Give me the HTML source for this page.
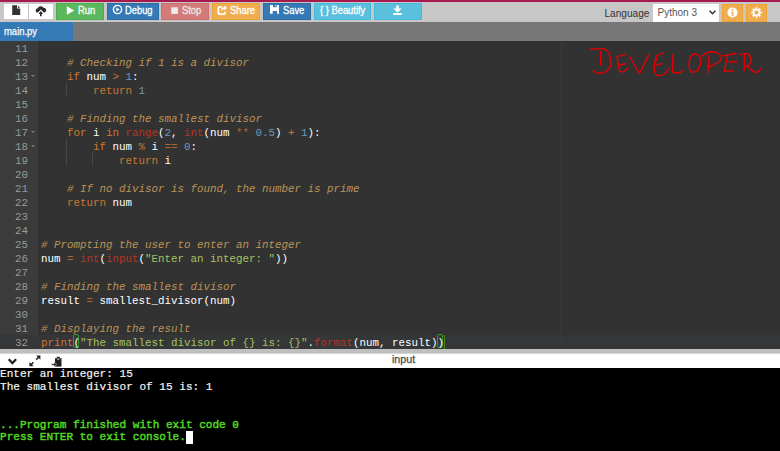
<!DOCTYPE html>
<html>
<head>
<meta charset="utf-8">
<style>
html,body{margin:0;padding:0;}
body{width:780px;height:451px;overflow:hidden;position:relative;background:#323232;font-family:"Liberation Sans",sans-serif;}
#stripe{position:absolute;left:0;top:0;width:780px;height:2px;background:#a6194f;}
#toolbar{position:absolute;left:0;top:2px;width:780px;height:20px;background:#c7c7c7;}
.btn{position:absolute;top:1px;height:17px;box-sizing:border-box;color:#fff;font-size:10.4px;line-height:14px;white-space:nowrap;border-radius:0;}
.t{position:absolute;top:0;display:inline-block;transform:scaleX(.9);transform-origin:0 0;-webkit-text-stroke:0.3px currentColor;}
#tabbar{position:absolute;left:0;top:22px;width:780px;height:19px;background:#777;}
#tab{position:absolute;left:0;top:0;width:73px;height:19px;background:#337ab7;color:#fff;font-size:10.5px;line-height:18px;box-sizing:border-box;}
#editor{position:absolute;left:0;top:41px;width:780px;height:308px;background:#323232;overflow:hidden;}
#gutter{position:absolute;left:0;top:0;width:38px;height:308px;background:#3b3b3b;}
.ln{position:absolute;left:0;width:28px;text-align:right;color:#999;height:14px;line-height:14px;font-family:"Liberation Mono",monospace;font-size:10.83px;}
.fold{position:absolute;left:31px;width:5px;height:14px;}
#code{position:absolute;left:41px;top:1px;}
.cl{position:absolute;left:0;height:14px;line-height:14px;white-space:pre;color:#fff;font-family:"Liberation Mono",monospace;font-size:10.83px;}
.k{color:#cc7833}.e{opacity:.78}.c{color:#bc9458;font-style:italic}.n{color:#6c99bb}.s{color:#a5c261}.f{color:#b83426}
#pm{position:absolute;left:561px;top:0;width:1px;height:308px;background:#3b3b3b;}
#active{position:absolute;left:0;top:294px;width:780px;height:14px;background:#353637;}
#gactive{position:absolute;left:0;top:294px;width:38px;height:14px;background:#353637;}
.br{position:absolute;height:14px;box-sizing:border-box;border:1px solid #2f9a2f;border-radius:2px;}
.guide{position:absolute;width:1px;background:#474747;}
#split{position:absolute;left:0;top:349px;width:780px;height:5px;background:#bfbfbf;border-bottom:1px solid #d6d6d6;box-sizing:border-box;}
#ctool{position:absolute;left:0;top:354px;width:780px;height:14px;background:#fff;}
#console{position:absolute;left:0;top:368px;width:780px;height:83px;background:#000;}
.co{position:absolute;left:0;height:13px;line-height:13px;white-space:pre;font-family:"Liberation Mono",monospace;font-weight:normal;font-size:11.07px;color:#f4f4f4;-webkit-text-stroke:0.2px #f4f4f4;}
.g{color:#50d820;-webkit-text-stroke:0.45px #50d820;}
</style>
</head>
<body>
<div id="stripe"></div>
<div id="toolbar">
  <div class="btn" style="left:4px;width:24px;background:#fff;top:1.5px;height:15.5px;"><svg style="position:absolute;left:8px;top:1.2px" width="9" height="11" viewBox="0 0 9 11"><path d="M0.2 0.3 H5 V3.6 H8.2 V10 H0.2 Z" fill="#333"/><path d="M5.8 0.5 L8.1 2.8 H5.8 Z" fill="#333"/></svg></div>
  <div class="btn" style="left:29px;width:24px;background:#fff;top:1.5px;height:15.5px;"><svg style="position:absolute;left:0;top:0" width="24" height="15.5" viewBox="29 3.5 24 15.5"><g fill="#2b2b2b"><circle cx="38" cy="10" r="2.35"/><circle cx="40.7" cy="8.6" r="2.9"/><circle cx="43.7" cy="9.8" r="2.45"/><rect x="38" y="9" width="5.8" height="3.2"/></g><path d="M37 13.6 L40.8 9.9 L44.6 13.6" fill="none" stroke="#fff" stroke-width="1.3"/><path d="M40.8 10.9 L43.1 13.4 H41.6 V15.8 H40 V13.4 H38.5 Z" fill="#2b2b2b"/></svg></div>
  <div class="btn" style="left:56px;width:48px;background:#5cb85c;border:1px solid #4cae4c;"><svg style="position:absolute;left:9.3px;top:1.7px" width="9" height="9" viewBox="0 0 9 9"><path d="M0.8 0.3 L8.2 4.5 L0.8 8.7 Z" fill="#fff"/></svg><span class="t" style="left:21px;top:0">Run</span></div>
  <div class="btn" style="left:107px;width:51.5px;background:#337ab7;border:1px solid #2e6da4;"><svg style="position:absolute;left:3.8px;top:0.1px" width="11" height="11" viewBox="0 0 11 11"><circle cx="5.5" cy="5.5" r="4.1" fill="none" stroke="#fff" stroke-width="1.4"/><path d="M4.3 3.5 L7.6 5.5 L4.3 7.5 Z" fill="#fff"/></svg><span class="t" style="left:17px;top:0">Debug</span></div>
  <div class="btn" style="left:161px;width:48px;background:#d37b78;border:1px solid #cf6f6b;color:#ebebeb;"><svg style="position:absolute;left:8.6px;top:2.6px" width="7.4" height="7.4" viewBox="0 0 8 8"><rect x="0.3" y="0.3" width="7.2" height="7.2" fill="#ebebeb"/></svg><span class="t" style="left:20px;top:0">Stop</span></div>
  <div class="btn" style="left:212px;width:48px;background:#f0ad4e;border:1px solid #eea236;"><svg style="position:absolute;left:3.6px;top:1px" width="11" height="11" viewBox="0 0 11 11"><path d="M5 1.9 H2.6 Q1.4 1.9 1.4 3.1 V7.9 Q1.4 9.1 2.6 9.1 H6.9 Q8.1 9.1 8.1 7.9 V6.8" fill="none" stroke="#fff" stroke-width="1.8"/><path d="M7.2 0.5 L10.3 3 L7.2 5.5 V3.9 Q5.2 4 4.4 6.4 Q3.8 2.6 7.2 2.1 Z" fill="#fff"/></svg><span class="t" style="left:17px;top:0">Share</span></div>
  <div class="btn" style="left:263px;width:48px;background:#337ab7;border:1px solid #2e6da4;"><svg style="position:absolute;left:5.8px;top:1.3px" width="9.6" height="8.8" viewBox="0 0 9.6 8.8"><path d="M0 0 H3 V2.3 H6.8 V0 H8.6 L9.6 1 V8.8 H7.1 V6 H2.7 V8.8 H0 Z" fill="#fff"/><rect x="5.3" y="0" width="0.9" height="1.5" fill="#fff" opacity=".8"/></svg><span class="t" style="left:19px;top:0">Save</span></div>
  <div class="btn" style="left:314px;width:57px;background:#5bc0de;border:1px solid #46b8da;"><span class="t" style="left:4.5px;top:0">{ } Beautify</span></div>
  <div class="btn" style="left:374px;width:48px;background:#5bc0de;border:1px solid #46b8da;"><svg style="position:absolute;left:17.2px;top:0.7px" width="11" height="10.6" viewBox="0 0 11 11"><path d="M4.1 0.4 H6.9 V3.6 H9.9 L5.5 7.7 L1.1 3.6 H4.1 Z" fill="#fff"/><rect x="1" y="8.3" width="9" height="2.2" fill="#fff"/></svg></div>
  <div style="position:absolute;left:604.5px;top:4.5px;font-size:10.1px;line-height:14px;color:#333;">Language</div>
  <div style="position:absolute;left:653px;top:2px;width:66px;height:17.5px;background:#fff;font-size:10px;line-height:18.5px;color:#555;box-sizing:border-box;padding-left:4.5px;border-radius:1px;">Python 3<svg style="position:absolute;left:56px;top:5.6px" width="7" height="5" viewBox="0 0 7 5"><path d="M0.6 0.8 L3.5 3.7 L6.4 0.8" fill="none" stroke="#333" stroke-width="1.5"/></svg></div>
  <div class="btn" style="left:722px;top:2px;width:21px;height:18px;background:#f0ad4e;border:1px solid #eea236;"><svg style="position:absolute;left:3.9px;top:2px" width="11" height="11" viewBox="0 0 11 11"><circle cx="5.5" cy="5.5" r="5.1" fill="#fff"/><circle cx="5.5" cy="3" r="1" fill="#f0ad4e"/><path d="M4.2 4.7 H6.3 V7.7 H7 V8.6 H4.1 V7.7 H4.8 V5.6 H4.2 Z" fill="#f0ad4e"/></svg></div>
  <div class="btn" style="left:746px;top:2px;width:21px;height:18px;background:#f0ad4e;border:1px solid #eea236;"><svg style="position:absolute;left:4px;top:2px" width="11" height="11" viewBox="-5.5 -5.5 11 11"><g fill="#fff"><circle r="3.6"/><rect x="-1.1" y="-5.2" width="2.2" height="10.4"/><rect x="-1.1" y="-5.2" width="2.2" height="10.4" transform="rotate(45)"/><rect x="-1.1" y="-5.2" width="2.2" height="10.4" transform="rotate(90)"/><rect x="-1.1" y="-5.2" width="2.2" height="10.4" transform="rotate(135)"/></g><circle r="2.1" fill="#f0ad4e"/></svg></div>
</div>
<div id="tabbar"><div id="tab"><span class="t" style="left:4px;top:0;-webkit-text-stroke:0.25px #fff;">main.py</span></div></div>
<div id="editor">
  <div id="active"></div>
  <div id="pm"></div>
  <div class="br" style="left:72.5px;top:293px;width:6.5px;"></div>
<div class="br" style="left:437px;top:293px;width:6px;"></div>
<div style="position:absolute;left:444px;top:294px;width:1px;height:14px;background:#52801a;"></div>
<svg style="position:absolute;left:580px;top:0" width="200" height="50" viewBox="580 41 200 50" fill="none" stroke="#e40000" stroke-width="1.4" stroke-linecap="round" stroke-linejoin="round">
<path d="M590.8 49.3 Q598 48.3 604.2 48.7 Q608 50.5 609.8 56 Q611.8 62 610.5 66.5 Q608 71.5 603 72.7 Q598 73.6 596 72.8 Q594.2 71.6 593.3 70.1"/>
<path d="M600.6 51.3 L600.7 65"/>
<path d="M625.8 54.4 Q621 55.6 617 56.7 Q618.2 63 619.4 70.8 Q621 72.4 623.2 71.8 Q626 70 628 67.6"/>
<path d="M618.7 65.7 Q622 64.4 625.8 63.7"/>
<path d="M629.9 56.7 Q634.5 66 639.5 73.3 Q644.5 64 648.5 55.1"/>
<path d="M663.5 52.8 Q660 54 656.2 56 Q655.4 58 656.4 60.5 Q656.2 58.5 656.2 56.4 Q654.2 63 654.2 69.5 Q655 75.5 658.3 75.9 Q662 75.6 664.5 74 Q667.2 71.5 669 68.5"/>
<path d="M656.6 65.2 Q659 64 662 63.7"/>
<path d="M673 54.4 Q672.6 63 672.4 72 Q676 73.2 679.5 73 Q681.5 72.2 682.7 70.9"/>
<path d="M693.9 53.8 Q690 55.5 689.1 62 Q688.6 70 691.5 72 Q695 72.8 697.8 70 Q700.8 65.5 700.9 60.5 Q700.4 54.6 693.9 53.8 Z"/>
<path d="M702 56.1 Q705 53.3 709 52.3 Q713 51.6 716.5 52.6 Q720 53.8 721.3 56.5 Q721.9 59.5 719.5 61.5 Q715 64.4 709 67"/>
<path d="M709.1 55.4 Q708.6 64 707.8 73"/>
<path d="M724.5 55.7 Q730 54.4 736 53.5"/>
<path d="M727.7 55 Q726 63 724.5 71.4 Q728.5 71.3 732.8 70.8"/>
<path d="M729.6 62 L736.7 61.8"/>
<path d="M744.4 54.7 L744.1 70.8"/>
<path d="M740.5 54.8 Q743 53.6 746 53.5 Q749.4 54.2 750.6 57 Q751.8 60 750.8 62.5 Q749 65 747 65.8 Q745.5 66.3 744.4 66.3"/>
<path d="M747 66 Q750 69 753.3 71.4 Q755.5 72.6 757.8 72 Q759.8 70.5 760.8 68.5"/>
</svg>
<div id="gutter"><div id="gactive"></div></div>
  <div id="guides">
<div class="guide" style="left:66px;top:41px;height:14px"></div>
<div class="guide" style="left:66px;top:97px;height:28px"></div>
<div class="guide" style="left:92px;top:111px;height:14px"></div>
</div>
<div id="lines" style="position:absolute;left:0;top:1px;">
<div class="ln" style="top:0px">11</div>
<div class="ln" style="top:14px">12</div>
<div class="ln" style="top:28px">13</div>
<div class="fold" style="top:28px"><svg width="5" height="14" viewBox="0 0 5 14"><path d="M0 5 L4.2 5 L2.1 7.3 Z" fill="#777"/></svg></div>
<div class="ln" style="top:42px">14</div>
<div class="ln" style="top:56px">15</div>
<div class="ln" style="top:70px">16</div>
<div class="ln" style="top:84px">17</div>
<div class="fold" style="top:84px"><svg width="5" height="14" viewBox="0 0 5 14"><path d="M0 5 L4.2 5 L2.1 7.3 Z" fill="#777"/></svg></div>
<div class="ln" style="top:98px">18</div>
<div class="fold" style="top:98px"><svg width="5" height="14" viewBox="0 0 5 14"><path d="M0 5 L4.2 5 L2.1 7.3 Z" fill="#777"/></svg></div>
<div class="ln" style="top:112px">19</div>
<div class="ln" style="top:126px">20</div>
<div class="ln" style="top:140px">21</div>
<div class="ln" style="top:154px">22</div>
<div class="ln" style="top:168px">23</div>
<div class="ln" style="top:182px">24</div>
<div class="ln" style="top:196px">25</div>
<div class="ln" style="top:210px">26</div>
<div class="ln" style="top:224px">27</div>
<div class="ln" style="top:238px">28</div>
<div class="ln" style="top:252px">29</div>
<div class="ln" style="top:266px">30</div>
<div class="ln" style="top:280px">31</div>
<div class="ln" style="top:294px">32</div>
</div>
  <div id="code">
<div class="cl" style="top:14px">    <span class="c"># Checking if 1 is a divisor</span></div>
<div class="cl" style="top:28px">    <span class="k">if</span> num <span class="k">&gt;</span> <span class="n">1</span>:</div>
<div class="cl" style="top:42px">        <span class="k">return</span> <span class="n">1</span></div>
<div class="cl" style="top:70px">    <span class="c"># Finding the smallest divisor</span></div>
<div class="cl" style="top:84px">    <span class="k">for</span> i <span class="k">in</span> <span class="f">range</span>(<span class="n">2</span>, <span class="f">int</span>(num <span class="k e">**</span> <span class="n">0.5</span>) <span class="k">+</span> <span class="n">1</span>):</div>
<div class="cl" style="top:98px">        <span class="k">if</span> num <span class="k">%</span> i <span class="k e">==</span> <span class="n">0</span>:</div>
<div class="cl" style="top:112px">            <span class="k">return</span> i</div>
<div class="cl" style="top:140px">    <span class="c"># If no divisor is found, the number is prime</span></div>
<div class="cl" style="top:154px">    <span class="k">return</span> num</div>
<div class="cl" style="top:196px"><span class="c"># Prompting the user to enter an integer</span></div>
<div class="cl" style="top:210px">num <span class="k e">=</span> <span class="f">int</span>(<span class="f">input</span>(<span class="s">"Enter an integer: "</span>))</div>
<div class="cl" style="top:238px"><span class="c"># Finding the smallest divisor</span></div>
<div class="cl" style="top:252px">result <span class="k e">=</span> smallest_divisor(num)</div>
<div class="cl" style="top:280px"><span class="c"># Displaying the result</span></div>
<div class="cl" style="top:294px"><span class="k">print</span>(<span class="s">"The smallest divisor of {} is: {}"</span>.<span class="f">format</span>(num, result))</div>
</div>
</div>
<div id="split"></div>
<div id="ctool"><svg style="position:absolute;left:0;top:0" width="70" height="14" viewBox="0 354 70 14"><path d="M8.7 359.3 L12.4 363 L16.1 359.3" fill="none" stroke="#222" stroke-width="2.3"/><path d="M36.2 359.6 L39 356.8 M33.4 362.4 L30.8 365" stroke="#222" stroke-width="1.5" fill="none"/><path d="M36.2 355.5 H40.4 V359.7 Z M29.4 366.2 H33.6 L29.4 362 Z" fill="#222"/><path d="M55 358.2 H61.5 V366.6 H55 Z" fill="#222"/><rect x="56.8" y="356.8" width="3" height="2.2" fill="#222"/><rect x="57.3" y="358.6" width="2" height="1" fill="#fff"/><path d="M51.4 363.7 H54 V362.1 L56.7 364.5 L54 366.9 V365.3 H51.4 Z" fill="#222" stroke="#fff" stroke-width="0.5"/></svg><div style="position:absolute;left:392px;top:-1px;font-size:10.7px;line-height:13px;color:#4a4a4a;-webkit-text-stroke:0.25px #4a4a4a;">input</div></div>
<div id="console">
  <div class="co" style="top:0px">Enter an integer: 15</div>
  <div class="co" style="top:12.5px">The smallest divisor of 15 is: 1</div>
  <div class="co g" style="top:51px">...Program finished with exit code 0</div>
  <div class="co g" style="top:62.5px">Press ENTER to exit console.</div>
  <div style="position:absolute;left:186px;top:63px;width:7px;height:12.5px;background:#fff;"></div>
</div>
</body>
</html>
